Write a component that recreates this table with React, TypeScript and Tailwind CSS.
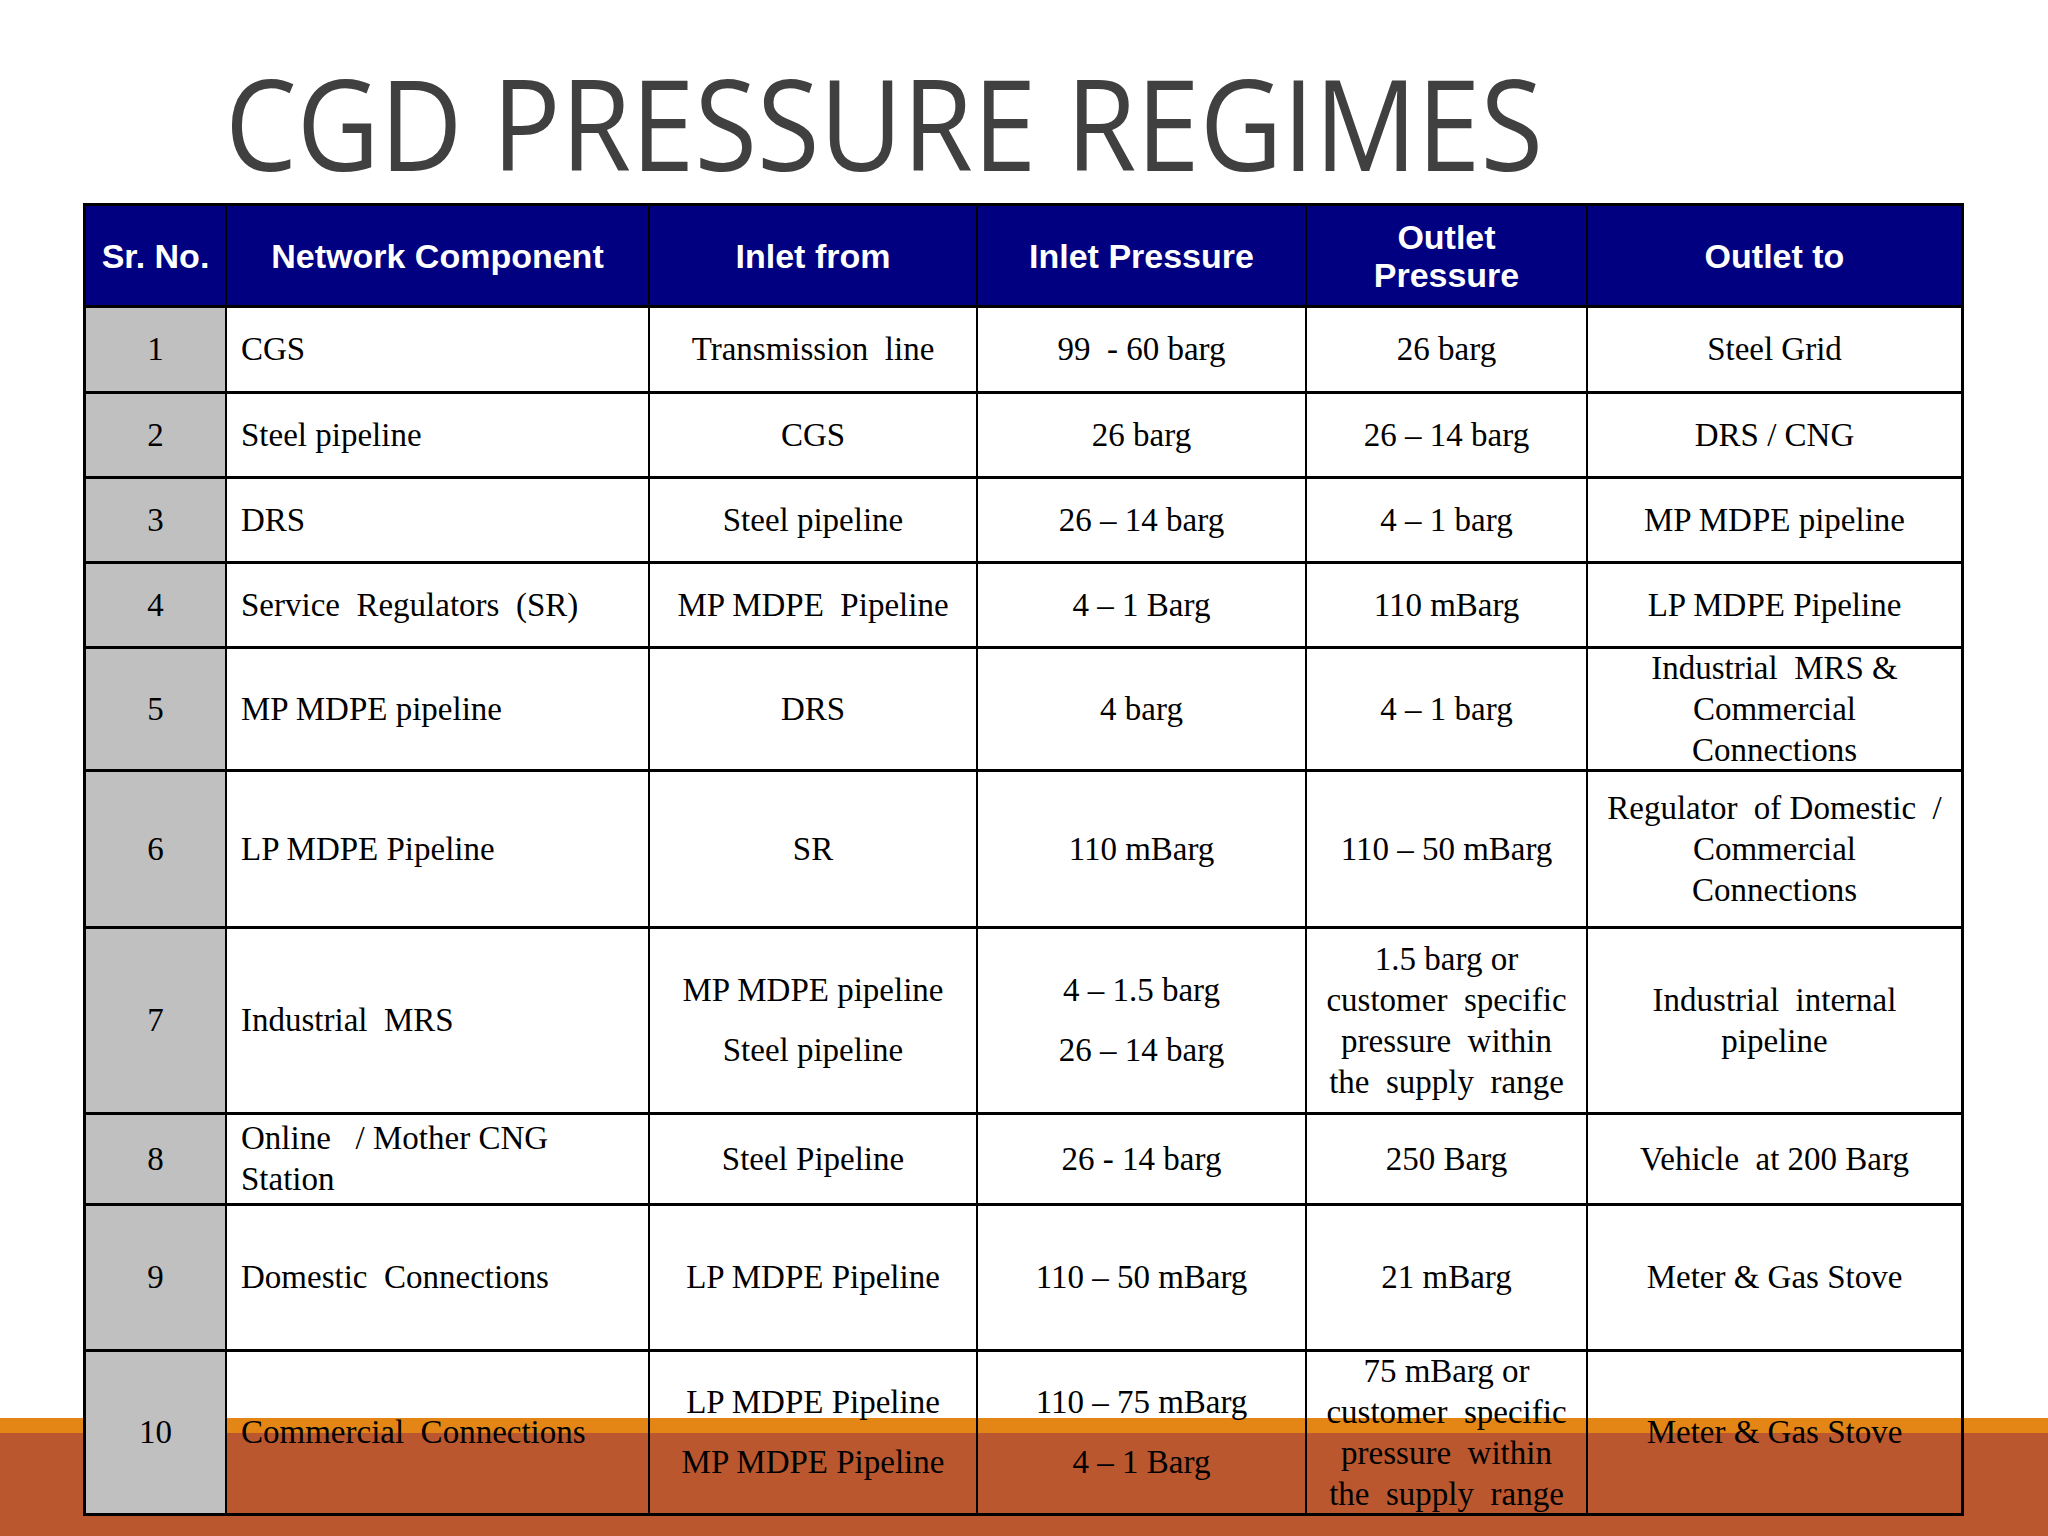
import React from "react";

type Cell = string[][]; // paragraphs of lines

interface Row {
  n: string;
  comp: string[];
  inlet: Cell;
  inP: Cell;
  outP: Cell;
  outTo: Cell;
}

const rows: Row[] = [
  { n: "1", comp: ["CGS"], inlet: [["Transmission  line"]], inP: [["99  - 60 barg"]], outP: [["26 barg"]], outTo: [["Steel Grid"]] },
  { n: "2", comp: ["Steel pipeline"], inlet: [["CGS"]], inP: [["26 barg"]], outP: [["26 – 14 barg"]], outTo: [["DRS / CNG"]] },
  { n: "3", comp: ["DRS"], inlet: [["Steel pipeline"]], inP: [["26 – 14 barg"]], outP: [["4 – 1 barg"]], outTo: [["MP MDPE pipeline"]] },
  { n: "4", comp: ["Service  Regulators  (SR)"], inlet: [["MP MDPE  Pipeline"]], inP: [["4 – 1 Barg"]], outP: [["110 mBarg"]], outTo: [["LP MDPE Pipeline"]] },
  { n: "5", comp: ["MP MDPE pipeline"], inlet: [["DRS"]], inP: [["4 barg"]], outP: [["4 – 1 barg"]], outTo: [["Industrial  MRS &", "Commercial", "Connections"]] },
  { n: "6", comp: ["LP MDPE Pipeline"], inlet: [["SR"]], inP: [["110 mBarg"]], outP: [["110 – 50 mBarg"]], outTo: [["Regulator  of Domestic  /", "Commercial", "Connections"]] },
  { n: "7", comp: ["Industrial  MRS"], inlet: [["MP MDPE pipeline"], ["Steel pipeline"]], inP: [["4 – 1.5 barg"], ["26 – 14 barg"]], outP: [["1.5 barg or", "customer  specific", "pressure  within", "the  supply  range"]], outTo: [["Industrial  internal", "pipeline"]] },
  { n: "8", comp: ["Online   / Mother CNG", "Station"], inlet: [["Steel Pipeline"]], inP: [["26 - 14 barg"]], outP: [["250 Barg"]], outTo: [["Vehicle  at 200 Barg"]] },
  { n: "9", comp: ["Domestic  Connections"], inlet: [["LP MDPE Pipeline"]], inP: [["110 – 50 mBarg"]], outP: [["21 mBarg"]], outTo: [["Meter & Gas Stove"]] },
  { n: "10", comp: ["Commercial  Connections"], inlet: [["LP MDPE Pipeline"], ["MP MDPE Pipeline"]], inP: [["110 – 75 mBarg"], ["4 – 1 Barg"]], outP: [["75 mBarg or", "customer  specific", "pressure  within", "the  supply  range"]], outTo: [["Meter & Gas Stove"]] },
];

const serif = "font-['Liberation_Serif','Times_New_Roman',serif] text-[33px] leading-[41px] text-black";
const cellBase = "border-r-2 border-b-[3px] border-black flex";

function CenterCell({ cell, last }: { cell: Cell; last?: boolean }) {
  return (
    <div className={(last ? "border-r-[3px] " : "") + cellBase + " flex-col items-center justify-center gap-[19px] text-center " + serif}>
      {cell.map((p, i) => (
        <div key={i} className="flex flex-col items-center">
          {p.map((l, j) => (
            <div key={j} className="whitespace-pre">{l}</div>
          ))}
        </div>
      ))}
    </div>
  );
}

const headerText = "font-['Liberation_Sans',Arial,sans-serif] font-bold text-[34px] leading-[38px] text-white";

function HeaderCell({ lines, last }: { lines: string[]; last?: boolean }) {
  return (
    <div className={(last ? "border-r-[3px] " : "") + cellBase + " bg-[#000080] flex-col items-center justify-center text-center " + headerText}>
      {lines.map((l, i) => (
        <div key={i} className="whitespace-pre">{l}</div>
      ))}
    </div>
  );
}

export default function App() {
  return (
    <div className="relative w-[2048px] h-[1536px] bg-white overflow-hidden">
      <div className="absolute left-0 right-0 bottom-0 flex flex-col">
        <div className="h-[15px] bg-[#E48616]" />
        <div className="h-[103px] bg-[#BA572E]" />
      </div>

      <div className="relative z-10 flex flex-col">
        <div className="mt-[59px] h-[126px] pl-[225px]">
          <h1 className="origin-left scale-x-[0.905] whitespace-nowrap font-['Open_Sans',sans-serif] text-[126px] leading-none font-medium text-[#404040]">
            CGD PRESSURE REGIMES
          </h1>
        </div>

        <div className="mt-[18px] ml-[83px] w-fit grid grid-cols-[141px_423px_328px_329px_281px_376px] grid-rows-[102px_86px_85px_85px_85px_123px_157px_186px_91px_146px_164px] border-t-[3px] border-l-[3px] border-black">
          <HeaderCell lines={["Sr. No."]} />
          <HeaderCell lines={["Network Component"]} />
          <HeaderCell lines={["Inlet from"]} />
          <HeaderCell lines={["Inlet Pressure"]} />
          <HeaderCell lines={["Outlet", "Pressure"]} />
          <HeaderCell lines={["Outlet to"]} last />

          {rows.map((r) => (
            <React.Fragment key={r.n}>
              <div className={cellBase + " bg-[#C0C0C0] items-center justify-center " + serif}>{r.n}</div>
              <div className={cellBase + " flex-col justify-center pl-[14px] " + serif}>
                {r.comp.map((l, i) => (
                  <div key={i} className="whitespace-pre">{l}</div>
                ))}
              </div>
              <CenterCell cell={r.inlet} />
              <CenterCell cell={r.inP} />
              <CenterCell cell={r.outP} />
              <CenterCell cell={r.outTo} last />
            </React.Fragment>
          ))}
        </div>
      </div>
    </div>
  );
}
